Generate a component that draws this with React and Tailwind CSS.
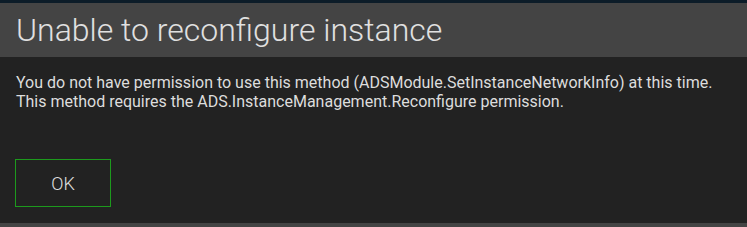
export default function App() {
  return (
    <div className="w-[747px] h-[227px] bg-[#222222] flex flex-col overflow-hidden" style={{ fontFamily: "Roboto, 'Liberation Sans', sans-serif" }}>
      <div className="h-[3px] bg-[#0c1c28] shrink-0" />
      <div className="h-[54px] bg-[#444444] shrink-0 flex items-center px-[16px]">
        <h1 className="text-[32px] font-light text-[#e0e0e0] leading-none">Unable to reconfigure instance</h1>
      </div>
      <div className="flex-1 px-[16px] pt-[16px]">
        <p className="text-[16px] leading-[19px] text-[#dddddd]">
          You do not have permission to use this method (ADSModule.SetInstanceNetworkInfo) at this time.
          <br />
          This method requires the ADS.InstanceManagement.Reconfigure permission.
        </p>
        <button className="mt-[48px] ml-[-1px] w-[96px] h-[48px] border border-[#1d9a1d] text-[#e0e0e0] text-[18px] font-light flex items-center justify-center">
          OK
        </button>
      </div>
      <div className="h-[4px] bg-[#444444] shrink-0" />
    </div>
  );
}
